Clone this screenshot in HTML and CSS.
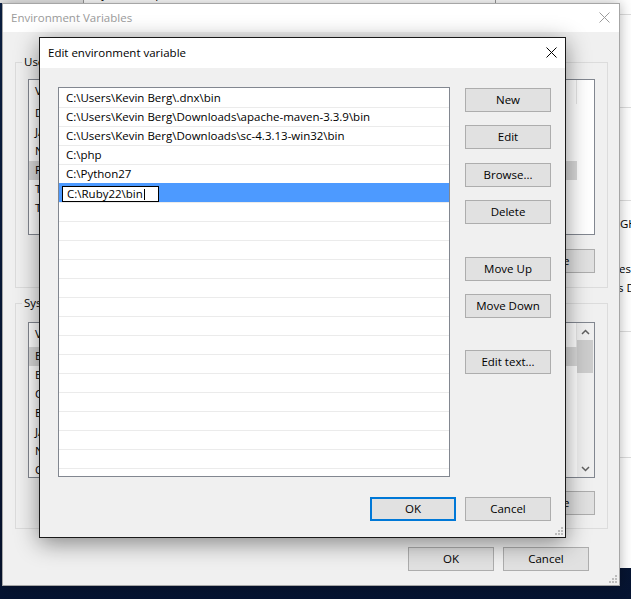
FILE: index.html
```html
<!DOCTYPE html>
<html lang="en">
<head>
<meta charset="utf-8">
<title>Environment Variables</title>
<link rel="stylesheet" href="styles.css">
</head>
<body>
<div class="desktop">

  <!-- Explorer window edge, top left -->
  <div class="window explorer"></div>

  <!-- System control panel page, behind everything -->
  <div class="window cpanel">
    <div class="cp-content">
      <div class="cp-sect s1"></div>
      <div class="cp-sect s2"></div>
      <div class="cp-sect s3"></div>
      <div class="cp-line l1">GHz</div>
      <div class="cp-line l2">ess</div>
      <div class="cp-line l3">s D</div>
      <div class="cp-sect s4"></div>
      <div class="cp-sect s5"></div>
    </div>
  </div>

  <!-- System Properties dialog -->
  <div class="window sysprops">
    <div class="titlebar"><span class="title">System Properties</span></div>
  </div>

  <!-- Environment Variables dialog (inactive) -->
  <div class="window envvars">
    <div class="titlebar">
      <span class="title">Environment Variables</span>
      <svg class="close" width="11" height="11" viewBox="0 0 11 11"><path d="M0.5 0.5 L10.5 10.5 M10.5 0.5 L0.5 10.5" stroke="currentColor" stroke-width="1" fill="none"/></svg>
    </div>
    <div class="ev-body">
      <div class="group user">
        <span class="legend">User variables for Kevin Berg</span>
        <div class="listview">
          <div class="lv-main">
            <div class="lv-head"><span class="cell c-var">Variable</span><span class="cell c-val">Value</span></div>
            <div class="lv-row"><span class="cell c-var">DNX_HOME</span><span class="cell c-val">C:\Users\Kevin Berg\.dnx</span></div>
            <div class="lv-row"><span class="cell c-var">JAVA_HOME</span><span class="cell c-val">C:\Program Files\Java\jdk1.8.0_65</span></div>
            <div class="lv-row"><span class="cell c-var">NODE_PATH</span><span class="cell c-val">C:\Users\Kevin Berg\AppData\Roaming\npm\node_modules</span></div>
            <div class="lv-row selected"><span class="cell c-var">Path</span><span class="cell c-val">C:\Users\Kevin Berg\.dnx\bin;C:\Users\Kevin Berg\Downloads\apache-maven-3.3.9\bin;C:\Users\Kevin Berg\Downloads\sc-4.3.13-win32\bin;C:\php;C:\Python27;C:\Ruby22\bin</span></div>
            <div class="lv-row"><span class="cell c-var">TEMP</span><span class="cell c-val">%USERPROFILE%\AppData\Local\Temp</span></div>
            <div class="lv-row"><span class="cell c-var">TMP</span><span class="cell c-val">%USERPROFILE%\AppData\Local\Temp</span></div>
          </div>
        </div>
        <div class="btnrow">
          <button class="btn">New...</button>
          <button class="btn">Edit...</button>
          <button class="btn">Delete</button>
        </div>
      </div>

      <div class="group system">
        <span class="legend">System variables</span>
        <div class="listview">
          <div class="lv-main">
            <div class="lv-head"><span class="cell c-var">Variable</span><span class="cell c-val">Value</span></div>
            <div class="lv-row selected"><span class="cell c-var">BOOST_ROOT</span><span class="cell c-val">C:\local\boost_1_59_0</span></div>
            <div class="lv-row"><span class="cell c-var">BUILD_TOOLS</span><span class="cell c-val">C:\Program Files (x86)\MSBuild\14.0\Bin</span></div>
            <div class="lv-row"><span class="cell c-var">ComSpec</span><span class="cell c-val">C:\WINDOWS\system32\cmd.exe</span></div>
            <div class="lv-row"><span class="cell c-var">ERLANG_HOME</span><span class="cell c-val">C:\Program Files\erl7.1</span></div>
            <div class="lv-row"><span class="cell c-var">JAVA_HOME</span><span class="cell c-val">C:\Program Files\Java\jdk1.8.0_65</span></div>
            <div class="lv-row"><span class="cell c-var">NUMBER_OF_PROCESSORS</span><span class="cell c-val">8</span></div>
            <div class="lv-row"><span class="cell c-var">OS</span><span class="cell c-val">Windows_NT</span></div>
          </div>
          <div class="vscroll">
            <div class="sb-arrow"><svg width="9" height="6" viewBox="0 0 9 6"><path d="M1 5 L4.5 1.5 L8 5" stroke="#606060" stroke-width="1.5" fill="none"/></svg></div>
            <div class="sb-thumb"></div>
            <div class="sb-track"></div>
            <div class="sb-arrow"><svg width="9" height="6" viewBox="0 0 9 6"><path d="M1 1 L4.5 4.5 L8 1" stroke="#606060" stroke-width="1.5" fill="none"/></svg></div>
          </div>
        </div>
        <div class="btnrow">
          <button class="btn">New...</button>
          <button class="btn">Edit...</button>
          <button class="btn">Delete</button>
        </div>
      </div>

      <div class="footer">
        <button class="btn">OK</button>
        <button class="btn">Cancel</button>
      </div>
    </div>
    <svg class="grip" width="8" height="8" viewBox="0 0 8 8"><path d="M6 0h2v2h-2z M3 3h2v2h-2z M6 3h2v2h-2z M0 6h2v2h-2z M3 6h2v2h-2z M6 6h2v2h-2z" fill="#bdbdbd"/></svg>
  </div>

  <!-- Edit environment variable dialog (active) -->
  <div class="window editdlg">
    <div class="titlebar">
      <span class="title">Edit environment variable</span>
      <svg class="close" width="11" height="11" viewBox="0 0 11 11"><path d="M0.5 0.5 L10.5 10.5 M10.5 0.5 L0.5 10.5" stroke="currentColor" stroke-width="1" fill="none"/></svg>
    </div>
    <div class="ed-body">
      <div class="ed-main">
        <div class="pathlist">
          <div class="prow">C:\Users\Kevin Berg\.dnx\bin</div>
          <div class="prow">C:\Users\Kevin Berg\Downloads\apache-maven-3.3.9\bin</div>
          <div class="prow">C:\Users\Kevin Berg\Downloads\sc-4.3.13-win32\bin</div>
          <div class="prow">C:\php</div>
          <div class="prow">C:\Python27</div>
          <div class="prow editing"><span class="editbox">C:\Ruby22\bin<span class="caret"></span></span></div>
          <div class="prow"></div>
          <div class="prow"></div>
          <div class="prow"></div>
          <div class="prow"></div>
          <div class="prow"></div>
          <div class="prow"></div>
          <div class="prow"></div>
          <div class="prow"></div>
          <div class="prow"></div>
          <div class="prow"></div>
          <div class="prow"></div>
          <div class="prow"></div>
          <div class="prow"></div>
          <div class="prow"></div>
          <div class="prow"></div>
          <div class="prow"></div>
        </div>
        <div class="ed-buttons">
          <button class="btn">New</button>
          <button class="btn">Edit</button>
          <button class="btn gap-s">Browse...</button>
          <button class="btn">Delete</button>
          <button class="btn gap-l">Move Up</button>
          <button class="btn">Move Down</button>
          <button class="btn gap-l2">Edit text...</button>
        </div>
      </div>
      <div class="ed-footer">
        <button class="btn default">OK</button>
        <button class="btn">Cancel</button>
      </div>
    </div>
    <svg class="grip" width="8" height="8" viewBox="0 0 8 8"><path d="M6 0h2v2h-2z M3 3h2v2h-2z M6 3h2v2h-2z M0 6h2v2h-2z M3 6h2v2h-2z M6 6h2v2h-2z" fill="#bdbdbd"/></svg>
  </div>

</div>
</body>
</html>
```

FILE: styles.css
```css
* { box-sizing: border-box; }

html, body { margin: 0; padding: 0; }

body {
  width: 631px;
  height: 599px;
  overflow: hidden;
  background: #08183a;
  font-family: "Open Sans", "Noto Sans", sans-serif;
  font-size: 11.5px;
  color: #000;
}

.desktop {
  position: relative;
  width: 631px;
  height: 599px;
  overflow: hidden;
  background: linear-gradient(180deg, #0c2248 0%, #061431 100%);
}

/* ---------- shared window chrome ---------- */
.window {
  position: absolute;
  display: flex;
  flex-direction: column;
}

.titlebar {
  flex: none;
  display: flex;
  align-items: center;
  background: #fff;
  padding-left: 8px;
}

.title { white-space: nowrap; }

.close { margin-left: auto; flex: none; display: block; }

.grip {
  position: absolute;
  right: 2px;
  bottom: 2px;
  display: block;
}

.btn {
  width: 86px;
  height: 24px;
  padding: 0 0 1px;
  margin: 0;
  border: 1px solid #adadad;
  background: #e1e1e1;
  font: inherit;
  color: #000;
  white-space: nowrap;
  flex: none;
}

.btn.default { border: 2px solid #0078d7; }

/* ---------- windows behind ---------- */
.explorer {
  left: -30px;
  top: -40px;
  width: 113px;
  height: 43px;
  background: #e6e6e6;
}

.cpanel {
  left: 496px;
  top: 0;
  width: 220px;
  height: 568px;
  background: #fff;
}

.cp-content { padding-left: 124px; }

.cp-sect { border-bottom: 1px solid #dcdcdc; }
.cp-sect.s1 { height: 15px; }
.cp-sect.s2 { height: 93px; }
.cp-sect.s3 { height: 93px; }
.cp-sect.s4 { height: 36px; }
.cp-sect.s5 { height: 126px; }

.cp-line { line-height: 16px; white-space: nowrap; }
.cp-line.l1 { margin-top: 15px; }
.cp-line.l2 { margin-top: 29px; margin-left: -1px; }
.cp-line.l3 { margin-top: 3px; margin-left: -2px; }

.sysprops {
  left: 83px;
  top: -27px;
  width: 413px;
  height: 300px;
  background: #f0f0f0;
  border: 1px solid #9a9a9a;
}

.sysprops .titlebar {
  height: 30px;
  align-items: flex-end;
  padding: 0 0 3px 11px;
}

/* ---------- Environment Variables ---------- */
.envvars {
  left: 2px;
  top: 3px;
  width: 618px;
  height: 583px;
  background: #f0f0f0;
  border: 1px solid #a6a6a6;
  box-shadow: 0 0 12px rgba(0, 0, 0, 0.3);
}

.envvars .titlebar {
  height: 28px;
  padding-bottom: 2px;
  color: #9b9b9b;
}

.envvars .close { margin-right: 9px; color: #9b9b9b; }

.ev-body {
  flex: 1;
  display: flex;
  flex-direction: column;
  padding: 30px 11px 0 12px;
}

.group {
  height: 226px;
  border: 1px solid #dcdcdc;
  padding: 0 12px;
  display: flex;
  flex-direction: column;
}

.group.system { margin-top: 15px; }

.legend {
  display: block;
  width: max-content;
  margin: -9px 0 0 -6px;
  padding: 0 2px 1px;
  line-height: 16px;
  background: #f0f0f0;
  white-space: nowrap;
}

.listview {
  height: 156px;
  margin-top: 8px;
  border: 1px solid #828790;
  background: #fff;
  display: flex;
  overflow: hidden;
  flex: none;
}

.group.system .listview { margin-top: 10px; }

.lv-main {
  width: 548px;
  flex: none;
  display: flex;
  flex-direction: column;
}

.lv-head {
  display: flex;
  height: 24px;
  flex: none;
  line-height: 22px;
}

.lv-head .c-val { border-right: 1px solid #e5e5e5; }

.lv-row {
  display: flex;
  height: 19px;
  flex: none;
  line-height: 18px;
}

.lv-row.selected { background: #d9d9d9; }

.cell {
  padding-left: 6px;
  white-space: nowrap;
  overflow: hidden;
  text-overflow: ellipsis;
}

.c-var { width: 160px; flex: none; }
.c-val { width: 388px; flex: none; padding-right: 10px; }

.vscroll {
  width: 17px;
  flex: none;
  background: #f0f0f0;
  display: flex;
  flex-direction: column;
}

.sb-arrow {
  height: 17px;
  display: flex;
  align-items: center;
  justify-content: center;
  flex: none;
}

.sb-arrow svg { display: block; }

.sb-thumb {
  height: 33px;
  margin-right: 1px;
  background: #cdcdcd;
  flex: none;
}

.sb-track { flex: 1; }

.btnrow {
  display: flex;
  justify-content: flex-end;
  gap: 9px;
  margin-top: 14px;
}

.group.system .btnrow { margin-top: 13px; }

.footer {
  display: flex;
  justify-content: flex-end;
  gap: 9px;
  margin: 18px 19px 0 0;
}

/* ---------- Edit environment variable ---------- */
.editdlg {
  left: 39px;
  top: 37px;
  width: 527px;
  height: 501px;
  background: #f0f0f0;
  border: 1px solid #1a1a1a;
  box-shadow: 0 5px 22px rgba(0, 0, 0, 0.45);
}

.editdlg .titlebar { height: 30px; padding-bottom: 1px; }

.editdlg .close { margin-right: 8px; color: #000; }

.ed-body {
  flex: 1;
  padding: 19px 14px 0 18px;
  display: flex;
  flex-direction: column;
}

.ed-main {
  display: grid;
  grid-template-columns: 392px 86px;
  column-gap: 15px;
}

.pathlist {
  height: 390px;
  border: 1px solid #828790;
  background: #fff;
  overflow: hidden;
}

.prow {
  height: 19px;
  border-top: 1px solid #ebebeb;
  padding-left: 7px;
  line-height: 18px;
  white-space: nowrap;
}

.prow:first-child {
  border-top: 0;
  line-height: 19px;
}

.prow.editing {
  background: #4d9aff;
  border-top-color: #4d9aff;
  padding-left: 3px;
}

.editbox {
  display: flex;
  align-items: center;
  width: 97px;
  height: 16px;
  margin-top: 2px;
  padding-left: 4px;
  background: #fff;
  border: 1px solid #000;
  line-height: 14px;
}

.caret {
  display: inline-block;
  width: 1px;
  height: 11px;
  margin-left: 1px;
  background: #000;
}

.ed-buttons {
  display: flex;
  flex-direction: column;
  gap: 13px;
  padding-top: 1px;
}

.ed-buttons .gap-s { margin-top: 1px; }
.ed-buttons .gap-l { margin-top: 20px; }
.ed-buttons .gap-l2 { margin-top: 19px; }

.ed-footer {
  display: flex;
  justify-content: flex-end;
  gap: 9px;
  margin-top: 20px;
}
```
